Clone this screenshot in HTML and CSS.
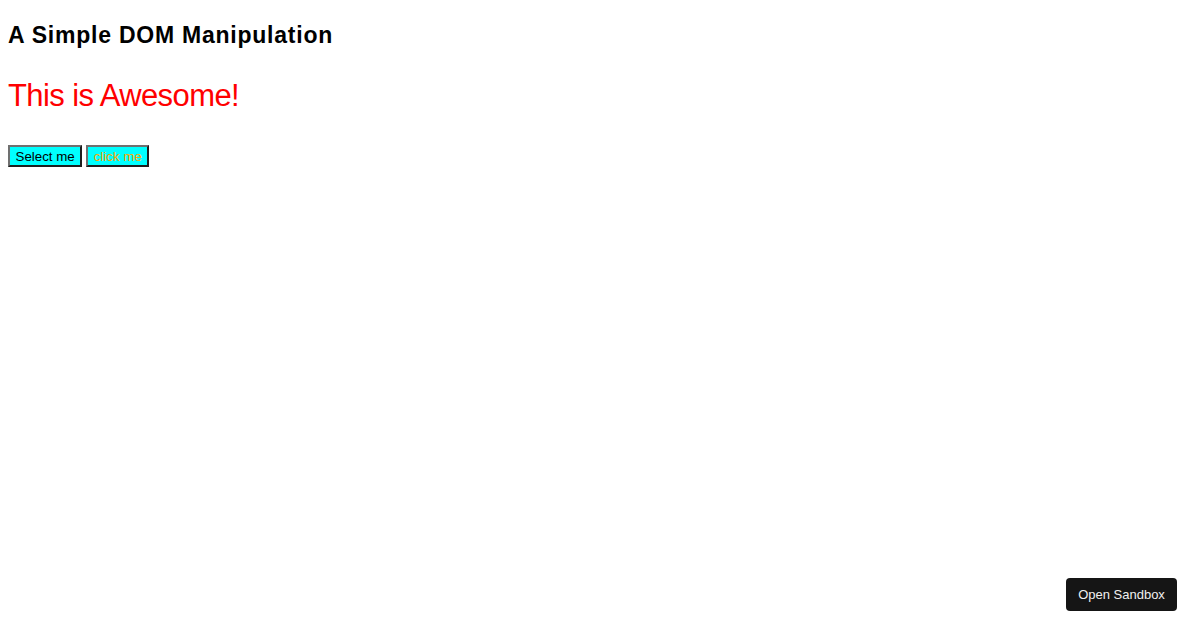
FILE: index.html
```html
<!DOCTYPE html>
<html>
<head>
<meta charset="utf-8">
<title>DOM</title>
<link rel="stylesheet" href="styles.css">
</head>
<body>
<h2 class="title">A Simple DOM Manipulation</h2>
<h1 class="awesome">This is Awesome!</h1>
<div class="buttons"><button class="btn">Select me</button><button class="btn btn-orange">click me</button></div>
<a class="sandbox" href="#">Open Sandbox</a>
</body>
</html>
```
FILE: styles.css
```css
body {
  font-family: "Liberation Sans", Arial, sans-serif;
  margin: 8px;
}
.title {
  font-size: 23px;
  line-height: 28px;
  letter-spacing: 0.77px;
  font-weight: bold;
  margin: 13px 0 0;
}
.awesome {
  font-size: 31px;
  line-height: 37px;
  letter-spacing: -0.6px;
  font-weight: normal;
  color: #ff0000;
  margin: 28px 0 0;
}
.buttons {
  display: flex;
  gap: 4px;
  margin-top: 31px;
}
.btn {
  font-family: "Liberation Sans", Arial, sans-serif;
  font-size: 13.33px;
  height: 22px;
  box-sizing: border-box;
  background: #00ffff;
  border: 2px solid;
  border-color: #707070 #1e1e1e #1e1e1e #707070;
  padding: 0 5.5px;
  margin: 0;
  color: #000;
}
.btn-orange {
  color: #ffa500;
}
.sandbox {
  position: fixed;
  right: 23px;
  bottom: 19px;
  width: 111px;
  height: 33px;
  box-sizing: border-box;
  display: flex;
  align-items: center;
  justify-content: center;
  background: #151515;
  color: #f0f0f0;
  border-radius: 4px;
  font-size: 13px;
  text-decoration: none;
  font-family: "Liberation Sans", Arial, sans-serif;
}
```
